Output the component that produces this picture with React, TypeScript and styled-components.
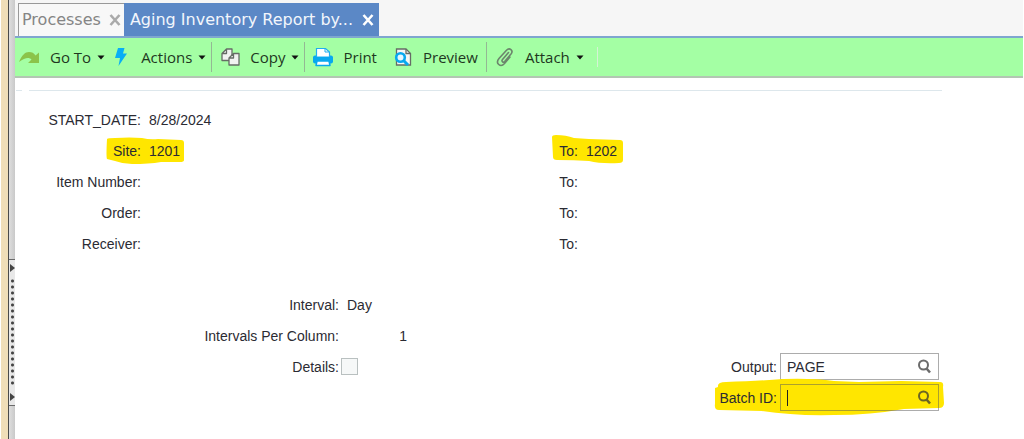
import React from "react";
import styled, { createGlobalStyle } from "styled-components";

const GlobalStyle = createGlobalStyle`
  * { box-sizing: border-box; }
  body { margin: 0; background: #fff; }
  button, input { font: inherit; color: inherit; }
`;

const Page = styled.div`
  display: flex;
  min-height: 100vh;
  padding: 0 1px;
  background: #fff;
  font: 14px/20px "Liberation Sans", Arial, sans-serif;
  color: #2b2b33;
`;

const Edge = styled.div`
  width: 7px;
  background: #f0deb8;
`;

const Splitter = styled.div`
  display: flex;
  flex-direction: column;
  width: 7px;
  border-left: 1px solid #4a4a4a;
  background: linear-gradient(90deg, #dedede, #c9c9c9);
`;

const Spacer = styled.div<{ $grow: number }>`
  flex: ${(p) => p.$grow} 0 0;
`;

const Grip = styled.button`
  display: flex;
  flex-direction: column;
  align-items: center;
  justify-content: space-between;
  height: 147px;
  width: 6px;
  padding: 4px 0;
  border: solid #6a6a6a;
  border-width: 1px 0;
  background: #e8e8e8;
`;

const Dots = styled.span`
  flex: 1;
  width: 3px;
  margin: 6px 0;
  background: radial-gradient(circle, #444 0 1px, transparent 2px) 0 0 / 3px 6px;
`;

const Main = styled.main`
  flex: 1;
  min-width: 0;
`;

const TabBar = styled.div`
  display: flex;
  height: 38px;
  padding: 3px 3px 0;
  border-bottom: 2px solid #7fa6cf;
  background: #f6f6f6;
`;

const Tab = styled.div<{ $active?: boolean }>`
  display: flex;
  align-items: center;
  gap: ${(p) => (p.$active ? 9 : 8)}px;
  height: 33px;
  padding: 0 ${(p) => (p.$active ? 5 : 3)}px;
  border: 1px solid ${(p) => (p.$active ? "#5b88c6" : "#999")};
  border-width: 1px 0 0 1px;
  background: ${(p) => (p.$active ? "#5b88c6" : "#f8f8f8")};
  color: ${(p) => (p.$active ? "#f2f6fc" : "#858585")};
  font: 16px/20px "DejaVu Sans", Verdana, sans-serif;
`;

const TabButton = styled.button`
  padding: 0;
  border: 0;
  background: none;
  white-space: nowrap;
`;

const CloseButton = styled(TabButton)`
  display: flex;
  color: ${(p) => p.color};
`;

const Toolbar = styled.div`
  display: flex;
  align-items: center;
  gap: 5px;
  height: 40px;
  padding: 0 4px;
  border-bottom: 2px solid #b3c6b3;
  background: #a4ffa4;
  font: 15px/20px "Open Sans", "Noto Sans", sans-serif;
`;

const ToolButton = styled.button<{ $space?: number }>`
  display: flex;
  align-items: center;
  gap: 6px;
  height: 30px;
  padding: 0 ${(p) => p.$space ?? 0}px 0 0;
  border: 0;
  background: none;
  color: #1f381f;
  white-space: nowrap;
`;

const IconBox = styled.span`
  display: flex;
  justify-content: center;
  width: 22px;
  margin-right: 3px;
`;

const Separator = styled.span<{ $faint?: boolean }>`
  width: 1px;
  height: ${(p) => (p.$faint ? 20 : 30)}px;
  margin: 0 2px 0 ${(p) => (p.$faint ? 8 : 0)}px;
  background: ${(p) => (p.$faint ? "#d5f3d5" : "#94b894")};
`;

const Form = styled.form`
  margin-right: 81px;
`;

const Rule = styled.div`
  display: flex;
  gap: 7px;
  padding: 12px 0 13px 1px;

  &::before, &::after {
    content: "";
    width: 6px;
    height: 1px;
    background: #dde7ec;
  }
  &::after { flex: 1; }
`;

const Criteria = styled.div`
  display: grid;
  grid-template-columns: minmax(0, 1fr) 390px;
`;

const Lower = styled.div`
  display: flex;
  align-items: flex-start;
  justify-content: space-between;
  margin-top: 30px;
`;

const OutputGroup = styled.div`
  width: 227px;
  margin-top: 62px;
  margin-right: 3px;
`;

const Row = styled.div<{ $label: number }>`
  position: relative;
  z-index: 0;
  display: grid;
  grid-template-columns: ${(p) => p.$label}px minmax(0, 1fr);
  align-items: center;
  height: 31px;
`;

const Label = styled.label`
  text-align: right;
  white-space: nowrap;
`;

const PlainInput = styled.input<{ $number?: boolean }>`
  width: ${(p) => (p.$number ? "68px" : "100%")};
  height: 22px;
  padding: 0 0 0 8px;
  border: 0;
  outline: 0;
  background: transparent;
  text-align: ${(p) => (p.$number ? "right" : "left")};
`;

const CheckBox = styled.input`
  appearance: none;
  width: 17px;
  height: 17px;
  margin: 0 0 0 2px;
  border: 1px solid #b9c0c0;
  background: #f6f8f8;
`;

const LookupBox = styled.div`
  position: relative;
  display: flex;
  align-items: center;
  height: 27px;
  margin-left: 3px;
  border: 1px solid rgba(90, 90, 90, 0.5);
`;

const LookupInput = styled.input`
  flex: 1;
  min-width: 0;
  height: 25px;
  padding: 0 0 0 6px;
  border: 0;
  outline: 0;
  background: transparent;
`;

const LookupButton = styled.button`
  display: flex;
  padding: 0 6px;
  border: 0;
  background: none;
  opacity: 0.72;
`;

const TextCursor = styled.span`
  position: absolute;
  left: 6px;
  top: 5px;
  width: 1px;
  height: 16px;
  background: #222;
`;

const Marker = styled.svg<{ $left: number; $top: number }>`
  position: absolute;
  z-index: -1;
  left: ${(p) => p.$left}px;
  top: ${(p) => p.$top}px;
  fill: #ffe600;
`;

const CrossIcon = () => (
  <svg width="12" height="12" viewBox="0 0 12 12" stroke="currentColor" strokeWidth="2.6" aria-hidden="true">
    <path d="M1.5 1l9 10M10.500 1l-9 10" />
  </svg>
);

const Caret = () => (
  <svg width="8" height="5" viewBox="0 0 8 5" aria-hidden="true">
    <path d="M0.500 0.500h7L4 4.500z" fill="#111" />
  </svg>
);

const GoIcon = () => (
  <svg width="22" height="14" viewBox="0 0 22 14" aria-hidden="true">
    <path d="M0 12C3 5 6 2 10 2c3 0 5 1 6.500 3.500L20 2.500V13H9l3.500-3.500C10 7 6 7.500 0 12z" fill="#8bc34a" />
  </svg>
);

const BoltIcon = () => (
  <svg width="14" height="20" viewBox="0 0 14 20" aria-hidden="true">
    <path d="M4 1h6.500L9 6.500h4L4.500 19 6 11H1z" fill="#08aef5" />
  </svg>
);

const CopyIcon = () => (
  <svg width="19" height="18" viewBox="0 0 19 18" fill="#f1f3f1" stroke="#666c66" strokeWidth="1.300" strokeLinejoin="round" aria-hidden="true">
    <path d="M5.500 1H11v11.500H1V5.500zM5.500 1v4.500H1" />
    <path d="M12.500 5.500H18V17H8V10zM12.500 5.500V10H8" />
  </svg>
);

const PrintIcon = () => (
  <svg width="22" height="20" viewBox="0 0 22 20" aria-hidden="true">
    <rect x="1" y="8.500" width="20" height="8" rx="2" fill="#08a8ef" />
    <path d="M4.500 10V1.500h9L17.500 5v5z" fill="#fff" stroke="#20aef0" strokeWidth="1.200" />
    <path d="M13 1.500V5h4" fill="none" stroke="#20aef0" />
    <path d="M1 10h20v4H1z" fill="#08a8ef" />
    <path d="M5 14h12l1 4.500H4z" fill="#fff" stroke="#08a8ef" strokeWidth="1.500" strokeLinejoin="round" />
  </svg>
);

const PreviewIcon = () => (
  <svg width="18" height="18" viewBox="0 0 18 18" fill="none" aria-hidden="true">
    <path d="M2.500 1H12l4.500 4.500V17h-14z" fill="#f5f7f5" stroke="#666c66" strokeWidth="1.300" />
    <path d="M12 1v4.500h4.500" stroke="#666c66" strokeWidth="1.300" />
    <circle cx="6.500" cy="9.500" r="4.300" fill="#e5f8ff" stroke="#08a8ef" strokeWidth="2.600" />
    <path d="M9.500 12.500l4.500 4.500" stroke="#08a8ef" strokeWidth="3" />
  </svg>
);

const ClipIcon = () => (
  <svg width="18" height="20" viewBox="0 0 18 20" fill="none" stroke="#6c856c" strokeWidth="1.600" strokeLinecap="round" aria-hidden="true">
    <path d="M12.500 5.500L6.500 12.500c-1.500 2 .8 3.500 2.200 2L15 7c2.800-3.500-1.500-7-4.500-3.800L3 11.500c-4 4.800 1.500 9.500 5.500 5L14 10" />
  </svg>
);

const SearchIcon = () => (
  <svg width="15" height="15" viewBox="0 0 15 15" fill="none" stroke="#333" aria-hidden="true">
    <circle cx="6.500" cy="6" r="4.500" strokeWidth="2" />
    <path d="M9.500 9.500l3.500 4" strokeWidth="2.500" />
  </svg>
);

type FieldProps = {
  id: string;
  label: string;
  value?: string;
  width: number;
  number?: boolean;
  children?: React.ReactNode;
};

const Field = ({ id, label, value = "", width, number, children }: FieldProps) => (
  <Row $label={width}>
    {children}
    <Label htmlFor={id}>{label}</Label>
    <PlainInput id={id} defaultValue={value} $number={number} />
  </Row>
);

const ranges = [
  { id: "item", label: "Item Number:" },
  { id: "order", label: "Order:" },
  { id: "receiver", label: "Receiver:" },
];

export default function App() {
  return (
    <Page>
      <GlobalStyle />
      <Edge />
      <Splitter>
        <Spacer $grow={259} />
        <Grip aria-label="Resize panel">
          <svg width="5" height="8" viewBox="0 0 5 8"><path d="M0 0l5 4-5 4z" fill="#444" /></svg>
          <Dots />
          <svg width="5" height="8" viewBox="0 0 5 8"><path d="M0 0l5 4-5 4z" fill="#444" /></svg>
        </Grip>
        <Spacer $grow={33} />
      </Splitter>
      <Main>
        <TabBar>
          <Tab>
            <TabButton>Processes</TabButton>
            <CloseButton color="#aaa" aria-label="Close Processes"><CrossIcon /></CloseButton>
          </Tab>
          <Tab $active>
            <TabButton>Aging Inventory Report by...</TabButton>
            <CloseButton color="#fff" aria-label="Close report"><CrossIcon /></CloseButton>
          </Tab>
        </TabBar>
        <Toolbar>
          <ToolButton><IconBox><GoIcon /></IconBox>Go To<Caret /></ToolButton>
          <ToolButton><IconBox><BoltIcon /></IconBox>Actions<Caret /></ToolButton>
          <Separator />
          <ToolButton><IconBox><CopyIcon /></IconBox>Copy<Caret /></ToolButton>
          <Separator />
          <ToolButton $space={10}><IconBox><PrintIcon /></IconBox>Print</ToolButton>
          <ToolButton $space={3}><IconBox><PreviewIcon /></IconBox>Preview</ToolButton>
          <Separator />
          <ToolButton><IconBox><ClipIcon /></IconBox>Attach<Caret /></ToolButton>
          <Separator $faint />
        </Toolbar>
        <Form onSubmit={(e) => e.preventDefault()}>
          <Rule />
          <Criteria>
            <Field id="start" label="START_DATE:" value="8/28/2024" width={126} />
            <span />
            <Field id="site" label="Site:" value="1201" width={126}>
              <Marker $left={91} $top={2} width="79" height="28" viewBox="0 0 79 28" aria-hidden="true">
                <path d="M1 2Q2 1 9 1Q24 0 36 1Q44 3 52 2L75 3Q78 3 78 6V23Q78 25 74 25H55Q43 27 26 27Q17 27 9 24L1 22Q0 20 1 2z" />
              </Marker>
            </Field>
            <Field id="site-to" label="To:" value="1202" width={26}>
              <Marker $left={0} $top={0} width="71" height="29" viewBox="0 0 71 29" aria-hidden="true">
                <path d="M0 2Q0 0 4 0Q14 0 22 3L37 4L68 5Q71 5 71 8V25Q71 28 67 28Q49 29 37 26Q22 25 5 25Q1 25 1 22z" />
              </Marker>
            </Field>
            {ranges.map((r) => (
              <React.Fragment key={r.id}>
                <Field id={r.id} label={r.label} width={126} />
                <Field id={r.id + "-to"} label="To:" width={26} />
              </React.Fragment>
            ))}
          </Criteria>
          <Lower>
            <div>
              <Field id="interval" label="Interval:" value="Day" width={324} />
              <Field id="per-column" label="Intervals Per Column:" value="1" width={324} number />
              <Row $label={324}>
                <Label htmlFor="details">Details:</Label>
                <CheckBox id="details" type="checkbox" />
              </Row>
            </div>
            <OutputGroup>
              <Row $label={65}>
                <Label htmlFor="output">Output:</Label>
                <LookupBox>
                  <LookupInput id="output" defaultValue="PAGE" />
                  <LookupButton type="button" aria-label="Look up output"><SearchIcon /></LookupButton>
                </LookupBox>
              </Row>
              <Row $label={65}>
                <Marker $left={2} $top={-4} width="231" height="38" viewBox="0 0 231 38" aria-hidden="true">
                  <path d="M4 9Q3 4 12 4Q45 3 69 1Q99 0 120 3L145 4L187 3L226 4Q230 4 229 9L230 25Q230 30 225 30L190 31Q157 37 120 37Q80 38 48 33L5 32Q0 32 1 26V10z" />
                </Marker>
                <Label htmlFor="batch">Batch ID:</Label>
                <LookupBox>
                  <LookupInput id="batch" />
                  <TextCursor />
                  <LookupButton type="button" aria-label="Look up batch ID"><SearchIcon /></LookupButton>
                </LookupBox>
              </Row>
            </OutputGroup>
          </Lower>
        </Form>
      </Main>
    </Page>
  );
}
